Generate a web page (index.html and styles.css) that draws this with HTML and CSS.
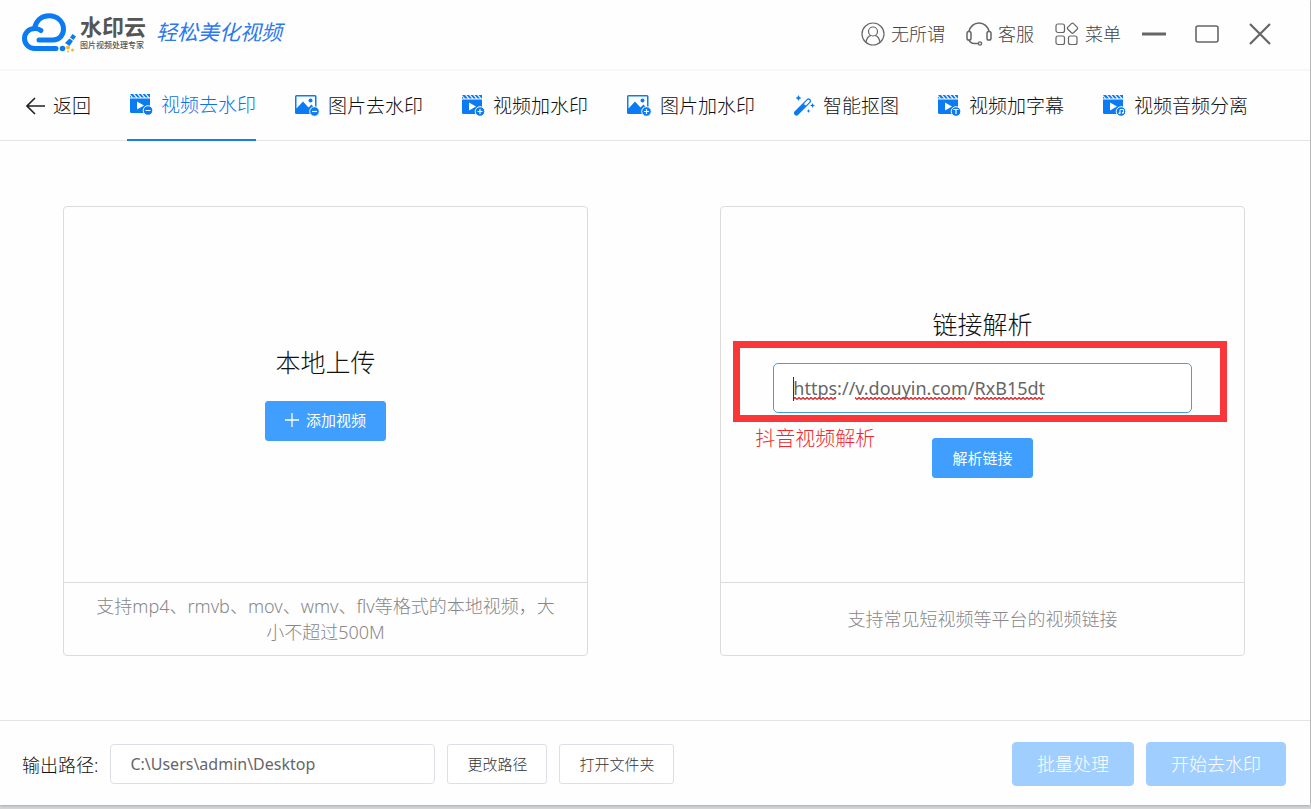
FILE: index.html
```html
<!DOCTYPE html>
<html lang="zh-CN">
<head>
  <meta charset="UTF-8" />
  <meta name="viewport" content="width=device-width, initial-scale=1.0"/>
  <title>水印云</title>
  <link rel="stylesheet" href="styles.css">
</head>
<body>

<!-- shared icon shapes -->
<svg class="sprite" width="0" height="0" aria-hidden="true">
  <symbol id="video" viewBox="0 0 23 22">
    <path d="M0 0h3l3 3.500H3zM4.500 0h2.500l3 3.500H7.500zM8.500 0H11l3 3.500h-2.500zM12.500 0H15l3 3.500h-2.500zM16.500 0H20v3.500h-.5zM0 1.500L1.800 3.500H0z" fill="#0a7bf2"/>
    <path d="M0 4.500h20V19H1.500Q0 19 0 17.500z" fill="#0a7bf2"/>
    <path d="M7 7.500l7 4-7 4z" fill="#fff"/>
    <circle cx="18" cy="16.500" r="4.800" fill="#0a7bf2" stroke="#fff"/>
  </symbol>
  <symbol id="picture" viewBox="0 0 25 22">
    <path d="M1.500 0h18.500Q21.500 0 21.500 1.500V19h-20Q0 19 0 17.500v-16Q0 0 1.500 0z" fill="#0a7bf2"/>
    <path d="M1.500 1.500H20v12l-3.500-4-3 3-5.500-6-6.500 7z" fill="#fff"/>
    <circle cx="15.500" cy="5.500" r="2" fill="#0a7bf2"/>
    <circle cx="19.500" cy="16.500" r="4.800" fill="#0a7bf2" stroke="#fff"/>
  </symbol>
</svg>

<div class="window">
  <header class="topbar">
    <div class="brand">
      <svg class="brand-logo" viewBox="0 0 54 40" aria-hidden="true">
        <path d="M34 35.500H13C6.500 35.500 2.500 31 2.500 25.500S6.500 15.500 13 15.500c2.500 0 4.500.8 6 2M12.500 15.500C14 7.500 19.500 2.800 27 2.800c8.500 0 14.500 6 14.500 13.200 0 6-4 11-10.500 11H17" fill="none" stroke="#0a7bf2" stroke-width="5" stroke-linecap="round"/>
        <circle cx="40.500" cy="35.500" r="2.800" fill="#0a7bf2"/>
        <path d="M50.500 21l3.500 2.500-2.500 3.500-3.500-2.500z" fill="#0a7bf2"/>
        <path d="M47.500 25.500l3.500 2.500-3.500 5-4.500-3z" fill="#0a7bf2"/>
        <circle cx="46" cy="34.500" r="2" fill="#f8b62b"/>
        <circle cx="50.500" cy="37" r="1.500" fill="#f8b62b"/>
        <circle cx="46" cy="38.500" r="1" fill="#f8b62b"/>
      </svg>
      <div class="brand-name">
        <strong>水印云</strong>
        <small>图片视频处理专家</small>
      </div>
      <span class="slogan">轻松美化视频</span>
    </div>

    <div class="tools">
      <button type="button" class="tool">
        <svg width="24" height="24" viewBox="0 0 24 24" aria-hidden="true">
          <circle cx="12" cy="12" r="11"/>
          <circle cx="12" cy="9.500" r="4.500"/>
          <path d="M5 20.500c.5-4 2.500-6.500 5-7.200M19 20.500c-.5-4-2.500-6.500-5-7.200"/>
        </svg>
        无所谓
      </button>
      <button type="button" class="tool">
        <svg width="26" height="24" viewBox="0 0 26 24" aria-hidden="true">
          <path d="M3 9.500C4 4.500 8 1 13 1s9 3.500 10 8.500M3 18c1 2.500 3 3.500 5.500 3.500H12" stroke-width="1.600"/>
          <rect x="1" y="9.500" width="4" height="8.500" rx="1.800" stroke-width="1.500"/>
          <rect x="21" y="9.500" width="4" height="8.500" rx="1.800" stroke-width="1.500"/>
          <circle cx="14" cy="21.500" r="1.600" stroke-width="1.400"/>
        </svg>
        客服
      </button>
      <button type="button" class="tool">
        <svg width="24" height="24" viewBox="0 0 24 24" aria-hidden="true">
          <rect x="1" y="2" width="8.500" height="8.500" rx="2"/>
          <rect x="1" y="14" width="8.500" height="8.500" rx="2"/>
          <rect x="13.500" y="14" width="8.500" height="8.500" rx="2"/>
          <rect x="13.500" y="2.200" width="8" height="8" rx="1.500" transform="rotate(45 17.500 6.200)"/>
        </svg>
        菜单
      </button>
      <div class="controls">
        <button type="button" aria-label="最小化">
          <svg width="24" height="24" viewBox="0 0 24 24"><path d="M0 12h24" stroke-width="3"/></svg>
        </button>
        <button type="button" aria-label="最大化">
          <svg width="24" height="24" viewBox="0 0 24 24"><rect x="1" y="4" width="22" height="16" rx="2" stroke-width="1.600"/></svg>
        </button>
        <button type="button" aria-label="关闭">
          <svg width="24" height="24" viewBox="0 0 24 24"><path d="M2 2l20 20M22 2L2 22" stroke-width="2.200"/></svg>
        </button>
      </div>
    </div>
  </header>

  <div class="tabbar">
    <nav class="tabs">
      <a class="back" href="#">
        <svg width="19" height="18" viewBox="0 0 19 18" aria-hidden="true"><path d="M19 9H1.500M9 1L1 9l8 8" fill="none" stroke="#222" stroke-width="1.600"/></svg>
        返回
      </a>
      <a class="tab active" href="#">
        <svg width="23" height="22" aria-hidden="true"><use href="#video"/><path d="M15.500 16.500h5" stroke="#fff"/></svg>
        视频去水印
      </a>
      <a class="tab" href="#">
        <svg width="25" height="22" aria-hidden="true"><use href="#picture"/><path d="M17 16.500h5" stroke="#fff" stroke-width="1.200"/></svg>
        图片去水印
      </a>
      <a class="tab" href="#">
        <svg width="23" height="22" aria-hidden="true"><use href="#video"/><path d="M15.500 16.500h5M18 14v5" stroke="#fff" stroke-width="1.200"/></svg>
        视频加水印
      </a>
      <a class="tab" href="#">
        <svg width="25" height="22" aria-hidden="true"><use href="#picture"/><path d="M17 16.500h5M19.500 14v5" stroke="#fff" stroke-width="1.200"/></svg>
        图片加水印
      </a>
      <a class="tab" href="#">
        <svg width="21" height="22" viewBox="0 0 21 22" aria-hidden="true">
          <path d="M2.500 18L14.500 6" stroke="#0a7bf2" stroke-width="5" stroke-linecap="round"/>
          <path d="M11.500 9l3-3" stroke="#fff" stroke-width="2.500" stroke-linecap="round"/>
          <path d="M4.500 0l1 2 2 1-2 1-1 2-1-2-2-1 2-1zM18.500 8l.8 1.700 1.700.8-1.700.8-.8 1.700-.8-1.700-1.700-.8 1.700-.8zM14.500 14l.6 1.400 1.400.6-1.400.6-.6 1.400-.6-1.400-1.400-.6 1.400-.6z" fill="#0a7bf2"/>
        </svg>
        智能抠图
      </a>
      <a class="tab" href="#">
        <svg width="23" height="22" aria-hidden="true"><use href="#video"/><path d="M15.500 14.500h5M18 14.500v4.500" stroke="#fff" stroke-width="1.200"/></svg>
        视频加字幕
      </a>
      <a class="tab" href="#">
        <svg width="23" height="22" aria-hidden="true"><use href="#video"/><path d="M17 18.500v-4h3.500v3.500" fill="none" stroke="#fff"/><circle cx="16.500" cy="18.300" r="1" fill="#fff"/><circle cx="19.800" cy="17.800" r="1" fill="#fff"/></svg>
        视频音频分离
      </a>
      <a class="tab" href="#" aria-label="更多">
        <svg width="23" height="22" aria-hidden="true"><rect y="2" width="21" height="19" rx="1" fill="#0a7bf2"/></svg>
      </a>
    </nav>
  </div>

  <main class="panels">
    <section class="card">
      <div class="card-body">
        <h2>本地上传</h2>
        <button type="button" class="btn primary add">
          <svg width="14" height="14" viewBox="0 0 14 14" aria-hidden="true"><path d="M7 0v14M0 7h14" stroke="#fff" stroke-width="1.300"/></svg>
          添加视频
        </button>
      </div>
      <p class="card-note">支持mp4、rmvb、mov、wmv、flv等格式的本地视频，大小不超过500M</p>
    </section>

    <section class="card">
      <div class="card-body">
        <h2>链接解析</h2>
        <div class="link-field">
          <input type="text" class="link-input" aria-label="视频链接" value="https://v.douyin.com/RxB15dt" spellcheck="false">
          <!-- caret and spelling marks -->
          <svg class="marks" width="260" height="28" aria-hidden="true">
            <defs>
              <pattern id="wave" width="4" height="3" patternUnits="userSpaceOnUse">
                <path d="M0 2.500L2 .5l2 2" fill="none" stroke="#e0262c" stroke-width="1.400"/>
              </pattern>
            </defs>
            <path d="M.5 1v24" stroke="#333"/>
            <rect x="1" y="21" width="42" height="3" fill="url(#wave)"/>
            <rect x="62" y="21" width="110" height="3" fill="url(#wave)"/>
            <rect x="181" y="21" width="69" height="3" fill="url(#wave)"/>
          </svg>
          <div class="highlight"></div>
          <span class="highlight-label">抖音视频解析</span>
        </div>
        <button type="button" class="btn primary">解析链接</button>
      </div>
      <p class="card-note">支持常见短视频等平台的视频链接</p>
    </section>
  </main>

  <footer class="bottombar">
    <label for="outputPath">输出路径:</label>
    <input type="text" id="outputPath" value="C:\Users\admin\Desktop" readonly>
    <button type="button" class="btn plain">更改路径</button>
    <button type="button" class="btn plain">打开文件夹</button>
    <div class="actions">
      <button type="button" class="btn start" disabled>批量处理</button>
      <button type="button" class="btn start" disabled>开始去水印</button>
    </div>
  </footer>
</div>

</body>
</html>
```
FILE: styles.css
```css
* {
  box-sizing: border-box;
}
body {
  margin: 0;
  padding: 0 1px 4px 0;
  height: 100vh;
  background: #d3d5d6;
  font-family: "Noto Sans", "Noto Sans CJK SC", sans-serif;
  font-weight: 300;
  color: #111;
}
button, input {
  font-family: inherit;
  font-weight: inherit;
}
button {
  cursor: pointer;
}
a {
  color: inherit;
  text-decoration: none;
}
.sprite {
  position: absolute;
}
.window {
  display: flex;
  flex-direction: column;
  height: 100%;
  background: #fefefe;
  box-shadow: 0 0 3px #888;
}

/* top bar */
.topbar {
  display: flex;
  justify-content: space-between;
  align-items: center;
  height: 71px;
  padding: 0 38px 2px 22px;
  border-bottom: 2px solid #f8f8f8;
}
.brand {
  display: flex;
  align-items: center;
  padding-bottom: 2px;
}
.brand-logo {
  width: 54px;
  height: 40px;
}
.brand-name {
  display: flex;
  flex-direction: column;
  gap: 5px;
  margin: 0 10px 0 4px;
  color: #555;
}
.brand-name strong {
  font-size: 22px;
  line-height: 20px;
  font-weight: 700;
}
.brand-name small {
  font-size: 8px;
  line-height: 8px;
  font-weight: 500;
}
.slogan {
  font-size: 21px;
  line-height: 28px;
  padding-bottom: 2px;
  font-weight: 400;
  font-style: italic;
  color: #2b78f0;
}
.tools, .controls {
  display: flex;
  align-items: center;
}
.tools {
  gap: 21px;
}
.tools button {
  padding: 0;
  border: 0;
  background: none;
}
.tools svg {
  display: block;
  fill: none;
  stroke: #666;
  stroke-width: 1.2;
}
.tool {
  display: flex;
  align-items: center;
  gap: 6px;
  font-size: 18px;
  line-height: 24px;
  color: #444;
}
.controls {
  gap: 29px;
}

/* feature tabs */
.tabbar {
  height: 70px;
  border-bottom: 1px solid #e4e4e4;
}
.tabs {
  position: relative;
  display: flex;
  gap: 39px;
  height: 70px;
  padding-left: 26px;
  margin-right: 23px;
  overflow: hidden;
  font-size: 19px;
  line-height: 28px;
}
.tabs a {
  display: flex;
  align-items: center;
  gap: 8px;
  flex: none;
  white-space: nowrap;
}
.tab.active {
  padding-left: 3px;
  margin-left: -3px;
  border-bottom: 2px solid #1a7ee6;
  color: #0a74e8;
}

/* upload cards */
.panels {
  flex: 1;
  display: grid;
  grid-template-columns: 1fr 1fr;
  gap: 132px;
  padding: 65px 65px 64px 63px;
}
.card {
  display: flex;
  flex-direction: column;
  border: 1px solid #dcdcdc;
  border-radius: 4px;
}
.card-body {
  flex: 1;
  display: flex;
  flex-direction: column;
  align-items: center;
  justify-content: center;
  gap: 25px;
  padding-bottom: 1px;
}
.card h2 {
  margin: 0;
  font-size: 25px;
  line-height: 28px;
  font-weight: 300;
  color: #111;
}
.card-note {
  display: flex;
  align-items: center;
  justify-content: center;
  height: 73px;
  margin: 0;
  padding: 0 30px;
  border-top: 1px solid #dcdcdc;
  font-size: 18px;
  line-height: 26px;
  text-align: center;
  color: #888;
}
.btn {
  height: 40px;
  padding: 0 19px 2px;
  border: 1px solid #409eff;
  border-radius: 3px;
  font-size: 15px;
}
.primary {
  background: #409eff;
  color: #fff;
  font-weight: 400;
}
.add {
  display: flex;
  align-items: center;
  gap: 7px;
}
.link-field {
  position: relative;
  width: 80%;
}
.link-input {
  display: block;
  width: 100%;
  height: 50px;
  padding: 0 19px;
  border: 1px solid #4a9be0;
  border-radius: 5px;
  background: #fff;
  font-size: 18px;
  font-weight: 400;
  color: #666;
}
.marks {
  position: absolute;
  left: 20px;
  top: 13px;
}
.highlight {
  position: absolute;
  inset: -22px -35px -9px -40px;
  border: 7px solid #fb3638;
  pointer-events: none;
}
.highlight-label {
  position: absolute;
  left: -18px;
  top: 62px;
  font-size: 20px;
  line-height: 28px;
  color: #f5262a;
}

/* output bar */
.bottombar {
  display: flex;
  align-items: center;
  gap: 12px;
  height: 85px;
  padding: 2px 24px 0 22px;
  border-top: 1px solid #e4e4e4;
}
.bottombar label {
  font-size: 18px;
}
#outputPath {
  width: 325px;
  height: 40px;
  padding: 0 19px;
  border: 1px solid #dcdfe6;
  border-radius: 4px;
  background: #fff;
  font-size: 16px;
  font-weight: 400;
  color: #666;
}
.plain {
  border-color: #dcdfe6;
  background: #fff;
  color: #333;
}
.actions {
  display: flex;
  gap: 12px;
  margin-left: auto;
}
.start {
  height: 44px;
  padding: 0 24px 2px;
  border-color: #a0cfff;
  border-radius: 4px;
  background: #a0cfff;
  color: #fff;
  font-size: 18px;
}
```
